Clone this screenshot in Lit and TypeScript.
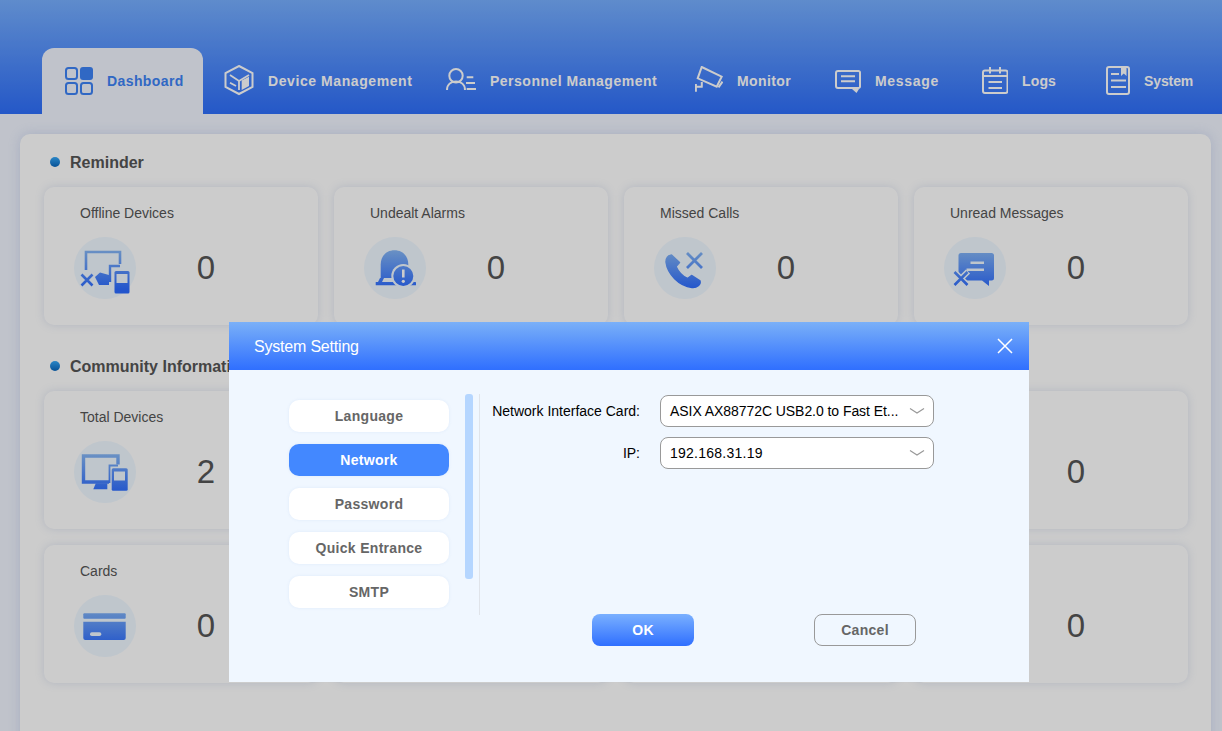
import { LitElement, html, css, svg } from "lit";
import { customElement } from "lit/decorators.js";

const nav = [
  { label: "Dashboard", ls: 0.4, w: 28, h: 28, icon: svg`<rect x="1" y="1" width="11" height="11" rx="2.5" fill="none"/><rect x="15" y="0" width="13" height="13" rx="3" fill="currentColor" stroke="none"/><rect x="1" y="16" width="11" height="11" rx="2.5" fill="none"/><rect x="16" y="16" width="11" height="11" rx="2.5" fill="none"/>` },
  { label: "Device Management", ls: 0.58, w: 30, h: 32, icon: svg`<path d="M15 1 28.500 8V22L15 29 1.500 22V8Z" fill="none"/><path d="M6 10l9 6 10-6M15 16v9" fill="none" stroke-width="1.800"/><path d="M17.700 15.500 25 11.700V21L17.700 25Z" fill="currentColor" stroke="none"/><path d="M6 17.700l6 3.300" fill="none" stroke-width="1.800"/>` },
  { label: "Personnel Management", ls: 0.5, w: 30, h: 26, icon: svg`<circle cx="10" cy="7.700" r="6.700" fill="none"/><path d="M1 22c0-5.500 4-8.500 9-8.500s9 3 9 8.500" fill="none"/><path d="M20.700 9.300h6.600M20 15h9M20.700 21H30" fill="none"/>` },
  { label: "Monitor", ls: 0.4, w: 28, h: 30, icon: svg`<path d="M6.700 1 26.700 10.700 21.700 20.700 2.700 12.300Z" fill="none"/><path d="M27.500 15.700 23.500 21.300M.9 18v7.700M.9 20.700H7.700M6.800 16v4.700" fill="none"/>` },
  { label: "Message", ls: 0.68, w: 26, h: 23, icon: svg`<path d="M3 1H23.500a1.500 1.500 0 0 1 1.500 1.500V16.500A1.500 1.500 0 0 1 23.500 18H3A2 2 0 0 1 1 16V3A2 2 0 0 1 3 1Z" fill="none"/><path d="M17 19H24L21.500 23Z" fill="currentColor" stroke="none"/><path d="M6 6.300H20M6 11.300H20" fill="none"/>` },
  { label: "Logs", ls: 0.15, w: 26, h: 28, icon: svg`<rect x="1" y="3.500" width="24.500" height="22.500" rx="2" fill="none"/><path d="M8 0v6.500M18 0v6.500M1 9H25.500M6.500 15H20M6.500 21H20" fill="none"/>` },
  { label: "System", ls: -0.1, w: 24, h: 31, icon: svg`<rect x="1" y="1" width="22" height="27" rx="2" fill="none"/><path d="M5 8h8M5 14.500H20M5 21H20" fill="none"/><path d="M15 1h5.500v9l-2.700-2.500L15 10Z" fill="currentColor" stroke="none"/>` },
];

const disc = "#eff8ff";
const icons: Record<string, unknown> = {
  offline: svg`<path d="M12 33V15H46V27" fill="none" stroke="url(#g)" stroke-width="2.600"/><path d="M36 45V29H46" fill="none" stroke="url(#g)" stroke-width="2.400"/><path d="M21 40l5-4.500 9 2.500V48H25Z" fill="url(#g)"/><rect x="40.500" y="34" width="15" height="22.500" rx="1.500" fill="url(#g)"/><rect x="42.500" y="37" width="11" height="9" fill="${disc}"/><path d="M7.500 37.500 18.500 48.500M18.500 37.500 7.500 48.500" stroke="url(#g)" stroke-width="2.600" fill="none"/>`,
  alarm: svg`<path d="M16.700 41V27.500C16.700 19 22.500 13.300 30.500 13.300S44.300 19 44.300 27.500V41Z" fill="url(#g)"/><rect x="11.700" y="45" width="40.300" height="3.300" rx=".6" fill="url(#g)"/><path d="M16 41h4l-2 4h-4Z" fill="url(#g)"/><circle cx="39.300" cy="39" r="12" fill="${disc}"/><circle cx="39.300" cy="39" r="10" fill="url(#g)"/><path d="M39.300 32.500V40.500" stroke="#fff" stroke-width="2.600" fill="none"/><circle cx="39.300" cy="44.300" r="1.600" fill="#fff"/>`,
  call: svg`<path d="M17.500 18C14.500 18.500 12 21 12 25 13.500 37 25 49 38 50.500 43 51 47 47.500 46 44L37.500 38.500 33.500 41.500C28 39 24 34 22 29.500L25.500 25.500Z" fill="url(#g)" stroke="url(#g)" stroke-width="1.500" stroke-linejoin="round"/><path d="M33 16 48 31M48 16 33 31" stroke="url(#g)" stroke-width="2.800" fill="none"/>`,
  unread: svg`<path d="M17 16H47.500A2.500 2.500 0 0 1 50 18.500V41A2.500 2.500 0 0 1 47.500 43.500H45V49L38 43.500H17A2.500 2.500 0 0 1 14.500 41V18.500A2.500 2.500 0 0 1 17 16Z" fill="url(#g)"/><path d="M26.500 25.700H40M22.500 32.700H40" stroke="${disc}" stroke-width="2.400" fill="none"/><path d="M10 34.500 24 48.500M24 34.500 10 48.500" stroke="${disc}" stroke-width="6" fill="none"/><path d="M10.500 35 23.500 48M23.500 35 10.500 48" stroke="url(#g)" stroke-width="2.600" fill="none"/>`,
  total: svg`<path d="M35 41H9.500V15H44V23.500" fill="none" stroke="url(#g)" stroke-width="3.400"/><path d="M35.500 42V24.500H44" fill="none" stroke="url(#g)" stroke-width="1.800"/><path d="M19.300 48.300l2.500-6H33.300V48.300Z" fill="url(#g)"/><rect x="37.700" y="27.300" width="16" height="22.400" rx="1.500" fill="url(#g)"/><rect x="40" y="30.500" width="11" height="9" fill="${disc}"/>`,
  card: svg`<rect x="9.300" y="18.300" width="42.400" height="5.400" rx="1" fill="url(#g)"/><path d="M9.300 26.700H51.700V43A2 2 0 0 1 49.700 45H11.300A2 2 0 0 1 9.300 43Z" fill="url(#g)"/><rect x="16" y="37.300" width="11.300" height="3.700" rx="1.800" fill="${disc}"/>`,
};

const rows = [
  [
    { t: "Offline Devices", i: "offline", n: "0" },
    { t: "Undealt Alarms", i: "alarm", n: "0" },
    { t: "Missed Calls", i: "call", n: "0" },
    { t: "Unread Messages", i: "unread", n: "0" },
  ],
  [
    { t: "Total Devices", i: "total", n: "2" },
    { t: "", i: "", n: "" },
    { t: "", i: "", n: "" },
    { t: "", i: "", n: "0" },
  ],
  [
    { t: "Cards", i: "card", n: "0" },
    { t: "", i: "", n: "" },
    { t: "", i: "", n: "" },
    { t: "", i: "", n: "0" },
  ],
];

@customElement("app-root")
export class AppRoot extends LitElement {
  static styles = css`
    :host {
      display: block;
      position: relative;
      height: 731px;
      overflow: hidden;
      background: #f0f4fe;
      font-family: "Liberation Sans", Arial, sans-serif;
    }
    .grad-defs { width: 0; height: 0; display: block; }
    .top {
      height: 114px;
      background: linear-gradient(#77afff, #2e6efa);
      display: grid;
      grid-template-columns: 182px 222px 249px 140px 147px 124px 1fr;
      padding: 48px 0 0 42px;
      box-sizing: border-box;
    }
    .tab {
      display: flex;
      align-items: center;
      gap: 14px;
      height: 66px;
      color: #fff;
      font-size: 14px;
      font-weight: 700;
      white-space: nowrap;
    }
    .tab svg { stroke: currentColor; stroke-width: 2; flex: none; color: #fff; }
    .tab.on {
      width: 161px;
      box-sizing: border-box;
      padding-left: 23px;
      background: #f0f4fe;
      border-radius: 12px 12px 0 0;
      color: #3d82f5;
    }
    .tab.on svg { color: #3d82f5; }
    .panel {
      margin: 20px 11px 0 20px;
      height: 640px;
      box-sizing: border-box;
      padding: 18px 23px 0 24px;
      background: #fff;
      border-radius: 10px;
      box-shadow: 0 0 12px rgba(140, 160, 210, 0.3);
    }
    .head {
      display: flex;
      align-items: center;
      gap: 10px;
      height: 20px;
      padding-left: 6px;
      margin-bottom: 15px;
      font-size: 16px;
      font-weight: 700;
      color: #555;
    }
    .head b { padding-top: 2px; font-weight: 700; }
    .head.next { margin-top: 31px; }
    .dot {
      width: 10px;
      height: 10px;
      border-radius: 50%;
      background: linear-gradient(#35a8f8, #0a66bc);
    }
    .grid {
      display: grid;
      grid-template-columns: repeat(4, 274px);
      gap: 16px;
    }
    .card {
      height: 138px;
      box-sizing: border-box;
      padding: 18px 0 0 30px;
      background: #fff;
      border-radius: 10px;
      box-shadow: 0 0 8px rgba(130, 150, 200, 0.25);
    }
    .card-title {
      height: 16px;
      line-height: 16px;
      margin: 0 0 16px 6px;
      font-size: 14px;
      color: #555;
    }
    .card-body { display: flex; align-items: center; height: 62px; }
    .disc { width: 62px; height: 62px; flex: none; border-radius: 50%; background: #eff8ff; }
    .disc svg { display: block; }
    .disc.none { background: transparent; }
    .num { width: 140px; text-align: center; font-size: 33px; color: #555; }
    .veil {
      position: absolute;
      inset: 0;
      background: rgba(0, 0, 0, 0.2);
      padding: 322px 0 0 229px;
      box-sizing: border-box;
    }
    .modal {
      width: 800px;
      height: 360px;
      display: flex;
      flex-direction: column;
      background: #f0f7ff;
    }
    .m-head {
      height: 48px;
      flex: none;
      display: flex;
      align-items: center;
      justify-content: space-between;
      padding: 0 16px 0 25px;
      background: linear-gradient(#7ab0f8, #2f6fff);
      color: #fff;
      font-size: 16px;
      letter-spacing: -0.2px;
    }
    .m-head span { padding-top: 2px; }
    .m-head svg { display: block; }
    .m-body { flex: 1; display: flex; min-height: 0; }
    .side { display: flex; align-items: flex-start; padding: 24px 0 0 60px; }
    .menu { display: flex; flex-direction: column; gap: 12px; width: 160px; padding-top: 6px; }
    .item {
      height: 32px;
      line-height: 32px;
      text-align: center;
      background: #fff;
      border-radius: 10px;
      font-size: 14px;
      font-weight: 700;
      letter-spacing: 0.3px;
      color: #666;
      box-shadow: 0 0 3px rgba(120, 160, 220, 0.15);
    }
    .item.on { background: #4388ff; color: #fff; }
    .thumb { width: 8px; height: 185px; margin-left: 16px; border-radius: 3px; background: #b5d6ff; }
    .rule { width: 1px; height: 221px; margin-left: 6px; background: #e0e4ea; }
    .right { flex: 1; display: flex; flex-direction: column; justify-content: space-between; padding: 25px 0 36px 12px; }
    .form {
      display: grid;
      grid-template-columns: 148px 274px;
      column-gap: 20px;
      row-gap: 10px;
      align-items: center;
      font-size: 14px;
      color: #000;
    }
    .lab { text-align: right; }
    .select {
      height: 32px;
      box-sizing: border-box;
      display: flex;
      align-items: center;
      justify-content: space-between;
      padding: 0 8px 0 9px;
      background: #fff;
      border: 1px solid #999;
      border-radius: 8px;
      white-space: nowrap;
      letter-spacing: -0.06px;
    }
    .select.ip { letter-spacing: 0.25px; }
    .actions { display: flex; gap: 120px; padding-left: 100px; }
    .btn {
      width: 102px;
      height: 32px;
      box-sizing: border-box;
      display: flex;
      align-items: center;
      justify-content: center;
      border-radius: 8px;
      font-size: 14px;
      font-weight: 700;
      letter-spacing: 0.3px;
    }
    .ok { background: linear-gradient(#7ab0ff, #2f6fff); color: #fff; }
    .cancel { border: 1px solid #999; color: #666; }
  `;

  private card(c: { t: string; i: string; n: string }) {
    return html`<div class="card">
      <div class="card-title">${c.t}</div>
      <div class="card-body">
        <div class="disc ${c.i ? "" : "none"}">
          ${c.i ? html`<svg width="62" height="62" viewBox="0 0 62 62">${icons[c.i]}</svg>` : ""}
        </div>
        <div class="num">${c.n}</div>
      </div>
    </div>`;
  }

  render() {
    return html`
      <svg class="grad-defs" aria-hidden="true">
        <defs>
          <linearGradient id="g" gradientUnits="userSpaceOnUse" x1="0" y1="13" x2="0" y2="52">
            <stop offset="0" stop-color="#85b6f5"></stop>
            <stop offset="1" stop-color="#2c6bff"></stop>
          </linearGradient>
        </defs>
      </svg>
      <div class="top">
        ${nav.map(
          (n, i) => html`<div class="tab ${i === 0 ? "on" : ""}">
            <svg width=${n.w} height=${n.h} viewBox="0 0 ${n.w} ${n.h}">${n.icon}</svg>
            <span style="letter-spacing:${n.ls}px">${n.label}</span>
          </div>`
        )}
      </div>
      <div class="panel">
        <div class="head"><span class="dot"></span><b>Reminder</b></div>
        <div class="grid">${rows[0].map((c) => this.card(c))}</div>
        <div class="head next"><span class="dot"></span><b>Community Information</b></div>
        <div class="grid">
          ${rows[1].map((c) => this.card(c))}${rows[2].map((c) => this.card(c))}
        </div>
      </div>
      <div class="veil">
        <div class="modal">
          <div class="m-head">
            <span>System Setting</span>
            <svg width="16" height="16" viewBox="0 0 16 16">
              <path d="M1 1 15 15M15 1 1 15" stroke="#fff" stroke-width="1.500" fill="none"></path>
            </svg>
          </div>
          <div class="m-body">
            <div class="side">
              <div class="menu">
                ${["Language", "Network", "Password", "Quick Entrance", "SMTP"].map(
                  (m) => html`<div class="item ${m === "Network" ? "on" : ""}">${m}</div>`
                )}
              </div>
              <div class="thumb"></div>
              <div class="rule"></div>
            </div>
            <div class="right">
              <div class="form">
                <div class="lab">Network Interface Card:</div>
                <div class="select"><span>ASIX AX88772C USB2.0 to Fast Et...</span>${this.chev()}</div>
                <div class="lab">IP:</div>
                <div class="select ip"><span>192.168.31.19</span>${this.chev()}</div>
              </div>
              <div class="actions">
                <div class="btn ok">OK</div>
                <div class="btn cancel">Cancel</div>
              </div>
            </div>
          </div>
        </div>
      </div>
    `;
  }

  private chev() {
    return html`<svg width="16" height="8" viewBox="0 0 16 8"><path d="M1 1.500 8 6 15 1.500" fill="none" stroke="#999" stroke-width="1.200"></path></svg>`;
  }
}
